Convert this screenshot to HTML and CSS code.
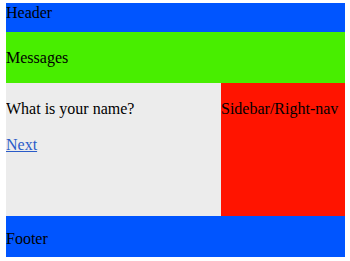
FILE: index.html
```html
<!DOCTYPE html>
<html>
<head>
<meta charset="utf-8">
<link rel="stylesheet" href="styles.css">
</head>
<body>
<div class="page">
  <header class="header">Header</header>
  <section class="messages"><p>Messages</p></section>
  <div class="content">
    <main class="main">
      <p>What is your name?</p>
      <p><a href="#" class="next">Next</a></p>
    </main>
    <aside class="sidebar"><p>Sidebar/Right-nav</p></aside>
  </div>
  <footer class="footer">Footer</footer>
</div>
</body>
</html>
```
FILE: styles.css
```css
html, body {
  background: #ffffff;
}
body {
  margin: 3px 5px 0 6px;
  font-family: "Liberation Serif", "Times New Roman", serif;
  font-size: 16px;
  line-height: 20px;
  color: #000;
}
.page {
  display: flex;
  flex-direction: column;
}
.header {
  background: #0055ff;
  height: 29px;
}
.messages {
  background: #48ee00;
  height: 51px;
  display: flow-root;
}
.messages p {
  margin: 16px 0;
}
.content {
  display: flex;
  height: 133px;
}
.main {
  flex: 1;
  background: #ececec;
  display: flow-root;
}
.main p {
  margin: 16px 0;
}
.sidebar {
  width: 124px;
  background: #ff1400;
  display: flow-root;
}
.sidebar p {
  margin: 16px 0;
}
.next {
  color: #2a5bc8;
}
.footer {
  background: #0055ff;
  height: 41px;
  padding-top: 13px;
  box-sizing: border-box;
}
```
